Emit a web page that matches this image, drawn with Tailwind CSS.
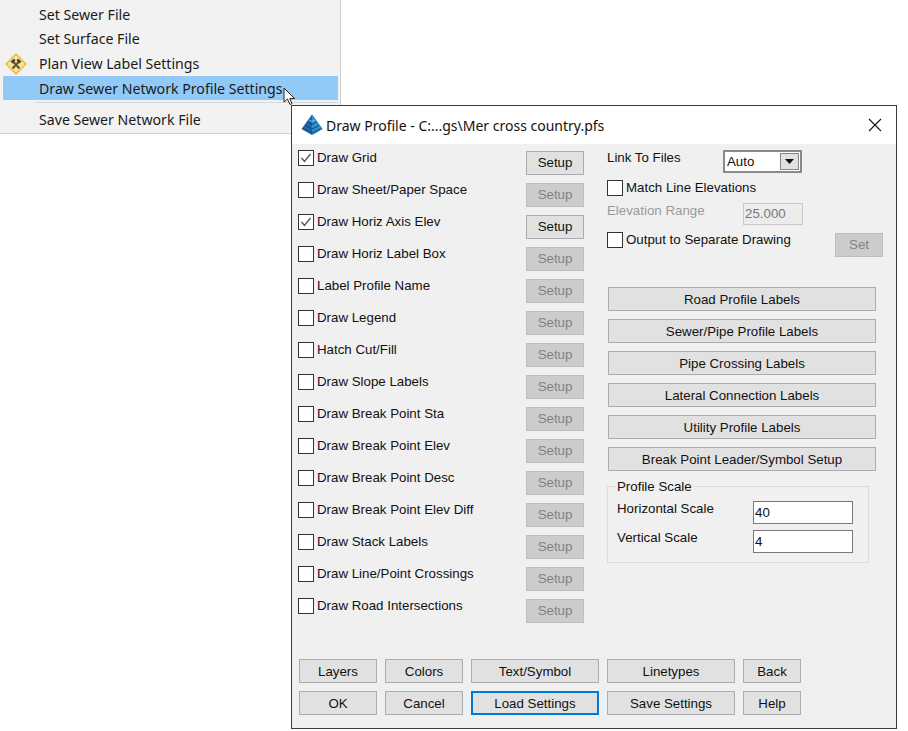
<!DOCTYPE html>
<html lang="en">
<head>
  <meta charset="UTF-8" />
  <title>Draw Profile</title>
  <script src="https://cdn.jsdelivr.net/npm/@tailwindcss/browser@4"></script>
</head>
<body class="bg-white w-[908px] h-[731px] relative overflow-hidden font-['Liberation_Sans',sans-serif] text-[13.3px] text-[#111]">

  <!-- context menu -->
  <div class="absolute left-0 top-0 w-[341px] h-[134px] bg-[#f2f2f2] border-r border-b border-[#cfcfcf] font-['Noto_Sans',sans-serif] text-[14.15px] text-[#1a1a1a]">
    <div class="h-[3px]"></div>
    <div class="h-[24px] pl-[39px] leading-[24px]">Set Sewer File</div>
    <div class="h-[24px] pl-[39px] leading-[24px]">Set Surface File</div>
    <div class="h-[25px] pl-[39px] leading-[25px] relative">
      <svg class="absolute left-[5px] top-[2px]" width="22" height="22" viewBox="0 0 22 22">
        <path d="M11 1 L21 11 L11 21 L1 11 Z" fill="#fde28a" stroke="#e9b840" stroke-width="1.300"/>
        <path d="M7.500 8 L14.500 15.500 M14.500 8 L7.500 15.500" stroke="#55524a" stroke-width="2"/>
        <path d="M5.500 8.500 L9 5.500 L10.500 7.500 L7.500 10.500 Z M13 5.500 L16.500 8.500 L14.500 10.500 L11.500 7.500 Z" fill="#45433c"/>
      </svg>
      Plan View Label Settings
    </div>
    <div class="h-[24px] ml-[3px] w-[335px] pl-[36px] leading-[25px] bg-[#91c9f7]">Draw Sewer Network Profile Settings</div>
    <div class="h-[3px] ml-[35px] mr-[2px] border-b border-[#d7d7d7] mb-[5px]"></div>
    <div class="h-[24px] pl-[39px] leading-[24px]">Save Sewer Network File</div>
  </div>

  <!-- dialog window -->
  <div class="absolute left-[291px] top-[105px] w-[606px] h-[624px] bg-[#f0f0f0] border border-[#3c3c3c] flex flex-col">
    <div class="h-[38px] shrink-0 bg-white flex items-center pl-[9px] font-['Noto_Sans',sans-serif] text-[14px] text-[#111]">
      <svg width="22" height="22" viewBox="0 0 22 22" class="mr-[3px]">
        <path d="M11 0.500 L21.500 15 L11 21 L0.500 15 Z" fill="#1b67a8"/>
        <path d="M11 0.500 L21.500 15 L11 21 Z" fill="#2f8fce"/>
        <path d="M6.500 8 L11 10.500 L15.500 8 M4 11.500 L11 15 L18 11.500 M2 14.500 L11 19 L20 14.500" fill="none" stroke="#0d4a80" stroke-width="1"/>
        <path d="M8 6 L11 7.500 L14 6" fill="none" stroke="#9fd2f2" stroke-width="0.800"/>
      </svg>
      Draw Profile - C:...gs\Mer cross country.pfs
      <svg width="14" height="14" viewBox="0 0 14 14" class="ml-auto mr-[14px]">
        <path d="M1 1 L13 13 M13 1 L1 13" stroke="#111" stroke-width="1.100"/>
      </svg>
    </div>

    <div class="flex flex-1 pl-[6px] pt-[7px]">
      <!-- left column -->
      <div class="w-[286px] flex flex-col gap-[8px] shrink-0">
        <div class="h-[24px] flex">
          <span class="w-[16px] h-[16px] border border-[#333] bg-white mt-[-1px] flex items-center justify-center">
            <svg width="12" height="12" viewBox="0 0 12 12"><path d="M1.500 6 L4.500 9.500 L10.500 2" fill="none" stroke="#555" stroke-width="1.400"/></svg>
          </span>
          <span class="ml-[3px] flex-1 leading-[16px] -mt-[1px]">Draw Grid</span>
          <span class="w-[58px] h-[24px] bg-[#e1e1e1] border border-[#adadad] flex items-center justify-center">Setup</span>
        </div>
        <div class="h-[24px] flex">
          <span class="w-[16px] h-[16px] border border-[#333] bg-white mt-[-1px]"></span>
          <span class="ml-[3px] flex-1 leading-[16px] -mt-[1px]">Draw Sheet/Paper Space</span>
          <span class="w-[58px] h-[24px] bg-[#cccccc] border border-[#bfbfbf] text-[#838383] flex items-center justify-center">Setup</span>
        </div>
        <div class="h-[24px] flex">
          <span class="w-[16px] h-[16px] border border-[#333] bg-white mt-[-1px] flex items-center justify-center">
            <svg width="12" height="12" viewBox="0 0 12 12"><path d="M1.500 6 L4.500 9.500 L10.500 2" fill="none" stroke="#555" stroke-width="1.400"/></svg>
          </span>
          <span class="ml-[3px] flex-1 leading-[16px] -mt-[1px]">Draw Horiz Axis Elev</span>
          <span class="w-[58px] h-[24px] bg-[#e1e1e1] border border-[#adadad] flex items-center justify-center">Setup</span>
        </div>
        <div class="h-[24px] flex">
          <span class="w-[16px] h-[16px] border border-[#333] bg-white mt-[-1px]"></span>
          <span class="ml-[3px] flex-1 leading-[16px] -mt-[1px]">Draw Horiz Label Box</span>
          <span class="w-[58px] h-[24px] bg-[#cccccc] border border-[#bfbfbf] text-[#838383] flex items-center justify-center">Setup</span>
        </div>
        <div class="h-[24px] flex">
          <span class="w-[16px] h-[16px] border border-[#333] bg-white mt-[-1px]"></span>
          <span class="ml-[3px] flex-1 leading-[16px] -mt-[1px]">Label Profile Name</span>
          <span class="w-[58px] h-[24px] bg-[#cccccc] border border-[#bfbfbf] text-[#838383] flex items-center justify-center">Setup</span>
        </div>
        <div class="h-[24px] flex">
          <span class="w-[16px] h-[16px] border border-[#333] bg-white mt-[-1px]"></span>
          <span class="ml-[3px] flex-1 leading-[16px] -mt-[1px]">Draw Legend</span>
          <span class="w-[58px] h-[24px] bg-[#cccccc] border border-[#bfbfbf] text-[#838383] flex items-center justify-center">Setup</span>
        </div>
        <div class="h-[24px] flex">
          <span class="w-[16px] h-[16px] border border-[#333] bg-white mt-[-1px]"></span>
          <span class="ml-[3px] flex-1 leading-[16px] -mt-[1px]">Hatch Cut/Fill</span>
          <span class="w-[58px] h-[24px] bg-[#cccccc] border border-[#bfbfbf] text-[#838383] flex items-center justify-center">Setup</span>
        </div>
        <div class="h-[24px] flex">
          <span class="w-[16px] h-[16px] border border-[#333] bg-white mt-[-1px]"></span>
          <span class="ml-[3px] flex-1 leading-[16px] -mt-[1px]">Draw Slope Labels</span>
          <span class="w-[58px] h-[24px] bg-[#cccccc] border border-[#bfbfbf] text-[#838383] flex items-center justify-center">Setup</span>
        </div>
        <div class="h-[24px] flex">
          <span class="w-[16px] h-[16px] border border-[#333] bg-white mt-[-1px]"></span>
          <span class="ml-[3px] flex-1 leading-[16px] -mt-[1px]">Draw Break Point Sta</span>
          <span class="w-[58px] h-[24px] bg-[#cccccc] border border-[#bfbfbf] text-[#838383] flex items-center justify-center">Setup</span>
        </div>
        <div class="h-[24px] flex">
          <span class="w-[16px] h-[16px] border border-[#333] bg-white mt-[-1px]"></span>
          <span class="ml-[3px] flex-1 leading-[16px] -mt-[1px]">Draw Break Point Elev</span>
          <span class="w-[58px] h-[24px] bg-[#cccccc] border border-[#bfbfbf] text-[#838383] flex items-center justify-center">Setup</span>
        </div>
        <div class="h-[24px] flex">
          <span class="w-[16px] h-[16px] border border-[#333] bg-white mt-[-1px]"></span>
          <span class="ml-[3px] flex-1 leading-[16px] -mt-[1px]">Draw Break Point Desc</span>
          <span class="w-[58px] h-[24px] bg-[#cccccc] border border-[#bfbfbf] text-[#838383] flex items-center justify-center">Setup</span>
        </div>
        <div class="h-[24px] flex">
          <span class="w-[16px] h-[16px] border border-[#333] bg-white mt-[-1px]"></span>
          <span class="ml-[3px] flex-1 leading-[16px] -mt-[1px]">Draw Break Point Elev Diff</span>
          <span class="w-[58px] h-[24px] bg-[#cccccc] border border-[#bfbfbf] text-[#838383] flex items-center justify-center">Setup</span>
        </div>
        <div class="h-[24px] flex">
          <span class="w-[16px] h-[16px] border border-[#333] bg-white mt-[-1px]"></span>
          <span class="ml-[3px] flex-1 leading-[16px] -mt-[1px]">Draw Stack Labels</span>
          <span class="w-[58px] h-[24px] bg-[#cccccc] border border-[#bfbfbf] text-[#838383] flex items-center justify-center">Setup</span>
        </div>
        <div class="h-[24px] flex">
          <span class="w-[16px] h-[16px] border border-[#333] bg-white mt-[-1px]"></span>
          <span class="ml-[3px] flex-1 leading-[16px] -mt-[1px]">Draw Line/Point Crossings</span>
          <span class="w-[58px] h-[24px] bg-[#cccccc] border border-[#bfbfbf] text-[#838383] flex items-center justify-center">Setup</span>
        </div>
        <div class="h-[24px] flex">
          <span class="w-[16px] h-[16px] border border-[#333] bg-white mt-[-1px]"></span>
          <span class="ml-[3px] flex-1 leading-[16px] -mt-[1px]">Draw Road Intersections</span>
          <span class="w-[58px] h-[24px] bg-[#cccccc] border border-[#bfbfbf] text-[#838383] flex items-center justify-center">Setup</span>
        </div>
      </div>

      <!-- right column -->
      <div class="ml-[23px] w-[277px] flex flex-col">
        <div class="h-[23px] flex -mt-[1px]">
          <span class="w-[116px] leading-[16px]">Link To Files</span>
          <span class="w-[79px] h-[23px] bg-white border-2 border-[#8a8a8a] flex items-center justify-between pl-[2px] pr-[1px]">
            <span class="pt-[1px]">Auto</span>
            <span class="w-[19px] h-[17px] bg-[#e1e1e1] border border-[#888] flex items-center justify-center">
              <svg width="9" height="5" viewBox="0 0 9 5"><path d="M0 0 H9 L4.500 5 Z" fill="#111"/></svg>
            </span>
          </span>
        </div>
        <div class="h-[16px] mt-[7px] flex">
          <span class="w-[16px] h-[16px] border border-[#333] bg-white"></span>
          <span class="ml-[3px] leading-[16px]">Match Line Elevations</span>
        </div>
        <div class="h-[22px] mt-[7px] flex items-start text-[#9a9a9a]">
          <span class="w-[136px] leading-[16px]">Elevation Range</span>
          <span class="w-[60px] h-[22px] border border-[#c8c8c8] bg-[#ececec] leading-[20px] pl-[1px] text-[#777]">25.000</span>
        </div>
        <div class="h-[25px] mt-[7px] flex">
          <span class="w-[16px] h-[16px] border border-[#333] bg-white"></span>
          <span class="ml-[3px] flex-1 leading-[16px]">Output to Separate Drawing</span>
          <span class="w-[48px] h-[24px] mt-[1px] mr-[1px] bg-[#cccccc] border border-[#bfbfbf] text-[#838383] flex items-center justify-center">Set</span>
        </div>
        <div class="mt-[30px] ml-[1px] w-[268px] flex flex-col gap-[8px]">
          <div class="h-[24px] pt-[1px] bg-[#e1e1e1] border border-[#adadad] flex items-center justify-center">Road Profile Labels</div>
          <div class="h-[24px] pt-[1px] bg-[#e1e1e1] border border-[#adadad] flex items-center justify-center">Sewer/Pipe Profile Labels</div>
          <div class="h-[24px] pt-[1px] bg-[#e1e1e1] border border-[#adadad] flex items-center justify-center">Pipe Crossing Labels</div>
          <div class="h-[24px] pt-[1px] bg-[#e1e1e1] border border-[#adadad] flex items-center justify-center">Lateral Connection Labels</div>
          <div class="h-[24px] pt-[1px] bg-[#e1e1e1] border border-[#adadad] flex items-center justify-center">Utility Profile Labels</div>
          <div class="h-[24px] pt-[1px] bg-[#e1e1e1] border border-[#adadad] flex items-center justify-center">Break Point Leader/Symbol Setup</div>
        </div>
        <div class="relative mt-[15px] w-[262px] h-[77px] border border-[#dcdcdc] pl-[9px] pt-[14px]">
          <span class="absolute left-[8px] -top-[8px] bg-[#f0f0f0] px-[1px] leading-[15px]">Profile Scale</span>
          <div class="flex h-[23px]">
            <span class="w-[136px] leading-[16px]">Horizontal Scale</span>
            <span class="w-[100px] h-[23px] bg-white border border-[#7a7a7a] pl-[1px] leading-[22px]">40</span>
          </div>
          <div class="flex h-[23px] mt-[6px]">
            <span class="w-[136px] leading-[16px]">Vertical Scale</span>
            <span class="w-[100px] h-[23px] bg-white border border-[#7a7a7a] pl-[1px] leading-[22px]">4</span>
          </div>
        </div>
      </div>
    </div>

    <!-- bottom buttons -->
    <div class="pl-[7px] pb-[13px] flex flex-col gap-[8px]">
      <div class="flex gap-[8px]">
        <span class="w-[78px] h-[24px] pt-[1px] bg-[#e1e1e1] border border-[#adadad] flex items-center justify-center">Layers</span>
        <span class="w-[78px] h-[24px] pt-[1px] bg-[#e1e1e1] border border-[#adadad] flex items-center justify-center">Colors</span>
        <span class="w-[128px] h-[24px] pt-[1px] bg-[#e1e1e1] border border-[#adadad] flex items-center justify-center">Text/Symbol</span>
        <span class="w-[128px] h-[24px] pt-[1px] bg-[#e1e1e1] border border-[#adadad] flex items-center justify-center">Linetypes</span>
        <span class="w-[58px] h-[24px] pt-[1px] bg-[#e1e1e1] border border-[#adadad] flex items-center justify-center">Back</span>
      </div>
      <div class="flex gap-[8px]">
        <span class="w-[78px] h-[24px] pt-[1px] bg-[#e1e1e1] border border-[#adadad] flex items-center justify-center">OK</span>
        <span class="w-[78px] h-[24px] pt-[1px] bg-[#e1e1e1] border border-[#adadad] flex items-center justify-center">Cancel</span>
        <span class="w-[128px] h-[24px] pt-[1px] bg-[#e1e1e1] border-2 border-[#0078d7] flex items-center justify-center">Load Settings</span>
        <span class="w-[128px] h-[24px] pt-[1px] bg-[#e1e1e1] border border-[#adadad] flex items-center justify-center">Save Settings</span>
        <span class="w-[58px] h-[24px] pt-[1px] bg-[#e1e1e1] border border-[#adadad] flex items-center justify-center">Help</span>
      </div>
    </div>
  </div>

  <!-- mouse pointer -->
  <svg class="absolute left-[283px] top-[87px]" width="13" height="19" viewBox="0 0 13 19">
    <path d="M1 1 V15 L4.500 12 L7 17.500 L9 16.500 L6.800 11.500 L11.500 11.500 Z" fill="#fff" stroke="#222" stroke-width="1"/>
  </svg>
</body>
</html>
